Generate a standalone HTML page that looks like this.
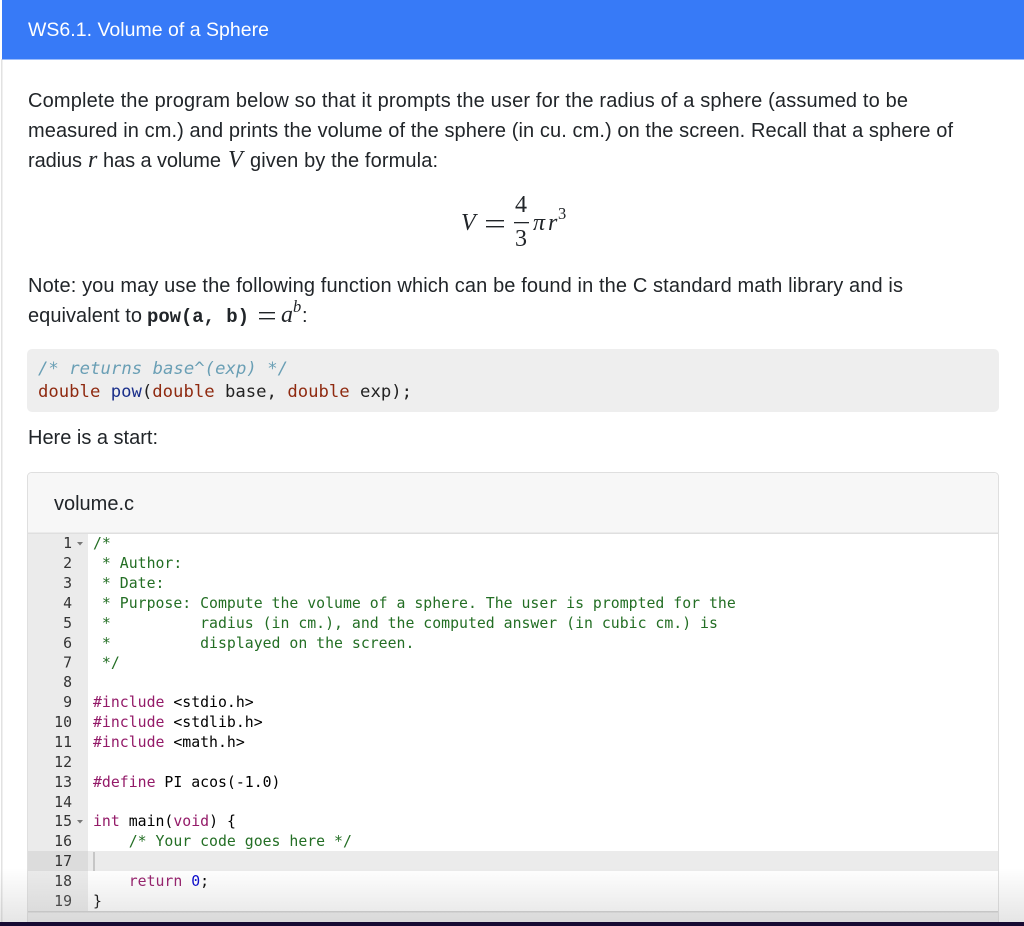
<!DOCTYPE html>
<html><head><meta charset="utf-8"><title>WS6.1. Volume of a Sphere</title>
<style>
html,body{margin:0;padding:0;background:#fff;overflow:hidden;width:1024px;height:926px}
svg{display:block}
text{white-space:pre}
.s{font-family:"Liberation Sans",sans-serif;font-size:20px;fill:#212529}
.m{font-family:"Liberation Serif",serif;fill:#212529}
.i{font-style:italic}
.c{font-family:"DejaVu Sans Mono",monospace;font-size:14.83px;fill:#000}
.n{font-family:"DejaVu Sans Mono",monospace;font-size:14.83px;fill:#333;text-anchor:end}
.g{fill:#236e24}.k{fill:#931a68}.d{fill:#0000cd}
.b{font-family:"DejaVu Sans Mono",monospace;font-size:17.25px;fill:#222}
</style></head><body>
<svg width="1024" height="926" viewBox="0 0 1024 926" xmlns="http://www.w3.org/2000/svg">
<defs><linearGradient id="f" x1="0" y1="0" x2="0" y2="1"><stop offset="0" stop-color="#aaa" stop-opacity="0"/><stop offset="1" stop-color="#aaa" stop-opacity=".3"/></linearGradient></defs>
<rect width="1024" height="926" fill="#fff"/>
<rect x="1" y="59" width="1.5" height="867" fill="#e2e2e2"/>
<rect x="2" y="0" width="1022" height="59.500" fill="#377af7"/>
<text x="28" y="36" class="s" style="fill:#fff;font-size:19.500px" textLength="241">WS6.1. Volume of a Sphere</text>

<text x="28" y="107" class="s" textLength="880">Complete the program below so that it prompts the user for the radius of a sphere (assumed to be</text>
<text x="28" y="137" class="s" textLength="925">measured in cm.) and prints the volume of the sphere (in cu. cm.) on the screen. Recall that a sphere of</text>
<text x="28" y="167" class="s" textLength="54">radius</text>
<text x="88" y="167" class="m i" font-size="24">r</text>
<text x="103" y="167" class="s" textLength="118">has a volume</text>
<text x="228" y="167" class="m i" font-size="24">V</text>
<text x="250" y="167" class="s" textLength="188">given by the formula:</text>

<text x="461" y="230" class="m i" font-size="24">V</text>
<rect x="486" y="220" width="18" height="1.400" fill="#212529"/>
<rect x="486" y="226" width="18" height="1.400" fill="#212529"/>
<text x="515" y="212" class="m" font-size="24">4</text>
<rect x="514" y="222" width="15" height="1.300" fill="#212529"/>
<text x="515" y="246" class="m" font-size="24">3</text>
<text x="533" y="230" class="m i" font-size="24">π</text>
<text x="548" y="230" class="m i" font-size="24">r</text>
<text x="558" y="219" class="m" font-size="16.500">3</text>

<text x="28" y="292" class="s" textLength="875">Note: you may use the following function which can be found in the C standard math library and is</text>
<text x="28" y="322" class="s" textLength="114">equivalent to</text>
<text x="147" y="322" font-family="Liberation Mono,monospace" font-weight="bold" font-size="19" fill="#212529" textLength="102">pow(a, b)</text>
<rect x="259" y="312" width="16" height="1.400" fill="#212529"/>
<rect x="259" y="318" width="16" height="1.400" fill="#212529"/>
<text x="281" y="322" class="m i" font-size="24">a</text>
<text x="293" y="312" class="m i" font-size="16.500">b</text>
<text x="302" y="322" class="s">:</text>

<rect x="27" y="349" width="972" height="63" rx="5" fill="#eee"/>
<text x="38" y="374" class="b" style="font-style:italic;fill:#6a9fb5" textLength="250">/* returns base^(exp) */</text>
<text x="38" y="397" class="b" textLength="374"><tspan fill="#8f2a10">double</tspan> <tspan fill="#1a2f8a">pow</tspan>(<tspan fill="#8f2a10">double</tspan> base, <tspan fill="#8f2a10">double</tspan> exp);</text>

<text x="28" y="444" class="s" textLength="130">Here is a start:</text>

<rect x="27.500" y="472.500" width="971" height="460" rx="4" fill="#fff" stroke="#dfdfdf"/>
<path d="M28 533V477a4 4 0 0 1 4-4H994a4 4 0 0 1 4 4V533Z" fill="#f7f7f7"/>
<rect x="28" y="532.500" width="970" height="1.500" fill="#dfdfdf"/>
<text x="54" y="510" class="s" textLength="80">volume.c</text>

<rect x="28" y="534" width="60" height="378" fill="#ebebeb"/>
<rect x="28" y="851" width="60" height="20" fill="#dcdcdc"/>
<rect x="88" y="851" width="910" height="20" fill="#ebebeb"/>
<rect x="93" y="852" width="2" height="19" fill="#c6c6c6"/>

<g class="nums">
<text x="72" y="548" class="n">1</text><text x="72" y="568" class="n">2</text><text x="72" y="588" class="n">3</text><text x="72" y="608" class="n">4</text><text x="72" y="628" class="n">5</text><text x="72" y="648" class="n">6</text><text x="72" y="667.500" class="n">7</text><text x="72" y="687" class="n">8</text><text x="72" y="707" class="n">9</text><text x="72" y="727" class="n">10</text><text x="72" y="747" class="n">11</text><text x="72" y="767" class="n">12</text><text x="72" y="787" class="n">13</text><text x="72" y="807" class="n">14</text><text x="72" y="826" class="n">15</text><text x="72" y="846" class="n">16</text><text x="72" y="866" class="n">17</text><text x="72" y="886" class="n">18</text><text x="72" y="906" class="n">19</text>
</g>
<path d="M77 542h6l-3 3.500Z" fill="#777"/>
<path d="M77 820h6l-3 3.500Z" fill="#777"/>

<text x="93" y="548" class="c g">/*</text>
<text x="93" y="568" class="c g"> * Author:</text>
<text x="93" y="588" class="c g"> * Date:</text>
<text x="93" y="608" class="c g"> * Purpose: Compute the volume of a sphere. The user is prompted for the</text>
<text x="93" y="628" class="c g"> *          radius (in cm.), and the computed answer (in cubic cm.) is</text>
<text x="93" y="648" class="c g"> *          displayed on the screen.</text>
<text x="93" y="667.500" class="c g"> */</text>
<text x="93" y="707" class="c"><tspan class="k">#include</tspan> &lt;stdio.h&gt;</text>
<text x="93" y="727" class="c"><tspan class="k">#include</tspan> &lt;stdlib.h&gt;</text>
<text x="93" y="747" class="c"><tspan class="k">#include</tspan> &lt;math.h&gt;</text>
<text x="93" y="787" class="c"><tspan class="k">#define</tspan> PI acos(-1.0)</text>
<text x="93" y="826" class="c"><tspan class="k">int</tspan> main(<tspan class="k">void</tspan>) {</text>
<text x="93" y="846" class="c g">    /* Your code goes here */</text>
<text x="93" y="886" class="c">    <tspan class="k">return</tspan> <tspan class="d">0</tspan>;</text>
<text x="93" y="906" class="c">}</text>

<rect x="28" y="911" width="970" height="1.500" fill="#cfcfcf"/>
<rect x="28" y="912.500" width="970" height="10" fill="#eeeeee"/>
<rect x="0" y="868" width="1024" height="54" fill="url(#f)"/>
<rect x="0" y="922" width="1024" height="4" fill="#170b33"/>
</svg>
</body></html>
